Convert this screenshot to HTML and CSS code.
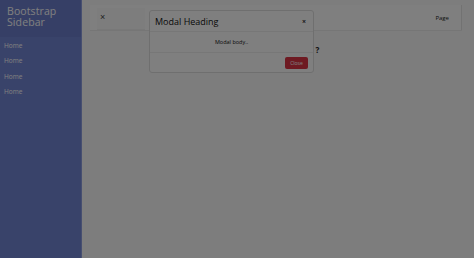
FILE: index.html
```html
<!DOCTYPE html>
<html lang="en">
<head>
    <meta charset="UTF-8">
    <meta name="viewport" content="width=device-width, initial-scale=1.0">
    <title>Bootstrap Sidebar</title>
    <link rel="stylesheet" href="styles.css">
</head>
<body>
    <div class="wrapper">
        <nav class="sidebar">
            <div class="sidebar-header">
                <h3>Bootstrap Sidebar</h3>
            </div>
            <ul class="components">
                <li><a href="#">Home</a></li>
                <li><a href="#">Home</a></li>
                <li><a href="#">Home</a></li>
                <li><a href="#">Home</a></li>
            </ul>
        </nav>

        <div class="content">
            <div class="navbar">
                <button class="toggle-btn">&times;</button>
                <a class="nav-link" href="#">Page</a>
            </div>
            <h2 class="page-title">Modal Example ?</h2>
        </div>
    </div>

    <div class="modal">
        <div class="modal-header">
            <h4>Modal Heading</h4>
            <span class="modal-close">&times;</span>
        </div>
        <div class="modal-body">Modal body..</div>
        <div class="modal-footer">
            <button class="btn-danger">Close</button>
        </div>
    </div>

    <!-- backdrop ends up above the modal too -->
    <div class="backdrop"></div>
</body>
</html>
```

FILE: styles.css
```css
body {
    margin: 0;
    font-family: "Open Sans", "Liberation Sans", sans-serif;
    background: #fafafa;
    height: 258px;
    overflow: hidden;
}
.wrapper {
    display: flex;
    height: 258px;
}
.sidebar {
    width: 81px;
    background: #7386d5;
    border-right: 1px solid #8f9ee0;
    color: #fff;
}
.sidebar-header {
    background: #6d7fcc;
    height: 37px;
    padding: 6px 7px 0;
    box-sizing: border-box;
}
.sidebar-header h3 {
    margin: 0;
    font-size: 10.5px;
    line-height: 11px;
    font-weight: 500;
    letter-spacing: 0.1px;
}
.components {
    list-style: none;
    margin: 0;
    padding: 1px 0 0;
}
.components li a {
    display: block;
    padding: 0 4px;
    height: 15.3px;
    line-height: 15.3px;
    font-size: 6.5px;
    color: #fff;
    text-decoration: none;
}
.content {
    flex: 1;
    padding: 5px 12px 0 8px;
}
.navbar {
    display: flex;
    align-items: center;
    justify-content: space-between;
    height: 25px;
    padding: 0 12px 0 7px;
    background: #fff;
    border-right: 1px solid #e4e4e4;
    box-shadow: 0 1px 0 #ededed;
}
.toggle-btn {
    width: 48px;
    height: 22px;
    margin-top: 3px;
    padding: 0 0 3px 3px;
    text-align: left;
    font-size: 9px;
    color: #444;
    background: #fafafa;
    border: none;
    border-bottom: 1px solid #f0f0f0;
}
.nav-link {
    font-size: 6px;
    color: #222;
    text-decoration: none;
}
.page-title {
    margin: 15px 0 0;
    padding-left: 20px;
    text-align: center;
    font-size: 8px;
    line-height: 9px;
    font-weight: 700;
    color: #222;
}
.modal {
    position: fixed;
    left: 149px;
    top: 10px;
    width: 163px;
    height: 61px;
    background: #fff;
    border: 1px solid #dedede;
    border-radius: 3px;
}
.modal-header {
    display: flex;
    align-items: center;
    justify-content: space-between;
    height: 20px;
    padding: 0 7px 0 5px;
    border-bottom: 1px solid #eee;
}
.modal-header h4 {
    margin: 0;
    padding-top: 1px;
    font-size: 9px;
    font-weight: 500;
    color: #111;
}
.modal-close {
    font-size: 7px;
    font-weight: 700;
    color: #333;
}
.modal-body {
    height: 20px;
    line-height: 20px;
    text-align: center;
    font-size: 5.5px;
    color: #111;
    border-bottom: 1px solid #eee;
}
.modal-footer {
    display: flex;
    justify-content: flex-end;
    padding: 4px 5px 0;
}
.btn-danger {
    width: 23px;
    height: 12px;
    padding: 0;
    font-family: inherit;
    font-size: 5px;
    color: #fff;
    background: #dc3545;
    border: none;
    border-radius: 2px;
}
.backdrop {
    position: fixed;
    inset: 0;
    background: rgba(0, 0, 0, 0.5);
}
```
